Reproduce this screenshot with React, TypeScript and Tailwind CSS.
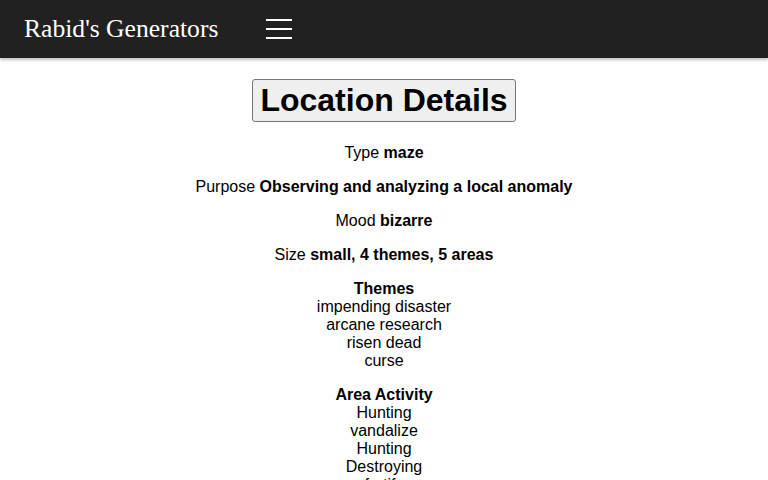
import React from 'react';

const details = [
  { label: 'Type', value: 'maze' },
  { label: 'Purpose', value: 'Observing and analyzing a local anomaly' },
  { label: 'Mood', value: 'bizarre' },
  { label: 'Size', value: 'small, 4 themes, 5 areas' },
];

const themes = ['impending disaster', 'arcane research', 'risen dead', 'curse'];
const activity = ['Hunting', 'vandalize', 'Hunting', 'Destroying', 'fortify'];

const App = () => {
  return (
    <div className="min-h-screen bg-white text-black font-['Liberation_Sans',Arial,sans-serif]">
      {/* Top bar */}
      <header className="h-[58px] bg-[#212121] flex items-center px-6 gap-12 shadow-[0_2px_3px_rgba(0,0,0,0.25)] relative z-10">
        <span className="text-white text-[25.6px] font-['Liberation_Serif','Times_New_Roman',serif] leading-none">
          Rabid's Generators
        </span>
        <button className="flex flex-col gap-[7px] w-[26px]">
          <span className="block h-[2px] bg-white" />
          <span className="block h-[2px] bg-white" />
          <span className="block h-[2px] bg-white" />
        </button>
      </header>

      <main className="flex flex-col items-center text-center pt-[21px]">
        <button className="px-[7px] py-[2px] border border-[#767676] rounded-[3px] bg-[#efefef] text-[32px] font-bold leading-[37px]">
          Location Details
        </button>

        <div className="mt-[22px] text-base leading-[18px] flex flex-col gap-4">
          {details.map((d) => (
            <p key={d.label}>
              {d.label} <b>{d.value}</b>
            </p>
          ))}

          <div>
            <p className="font-bold">Themes</p>
            {themes.map((t) => (
              <p key={t}>{t}</p>
            ))}
          </div>

          <div>
            <p className="font-bold">Area Activity</p>
            {activity.map((a, i) => (
              <p key={i}>{a}</p>
            ))}
          </div>
        </div>
      </main>
    </div>
  );
};

export default App;
